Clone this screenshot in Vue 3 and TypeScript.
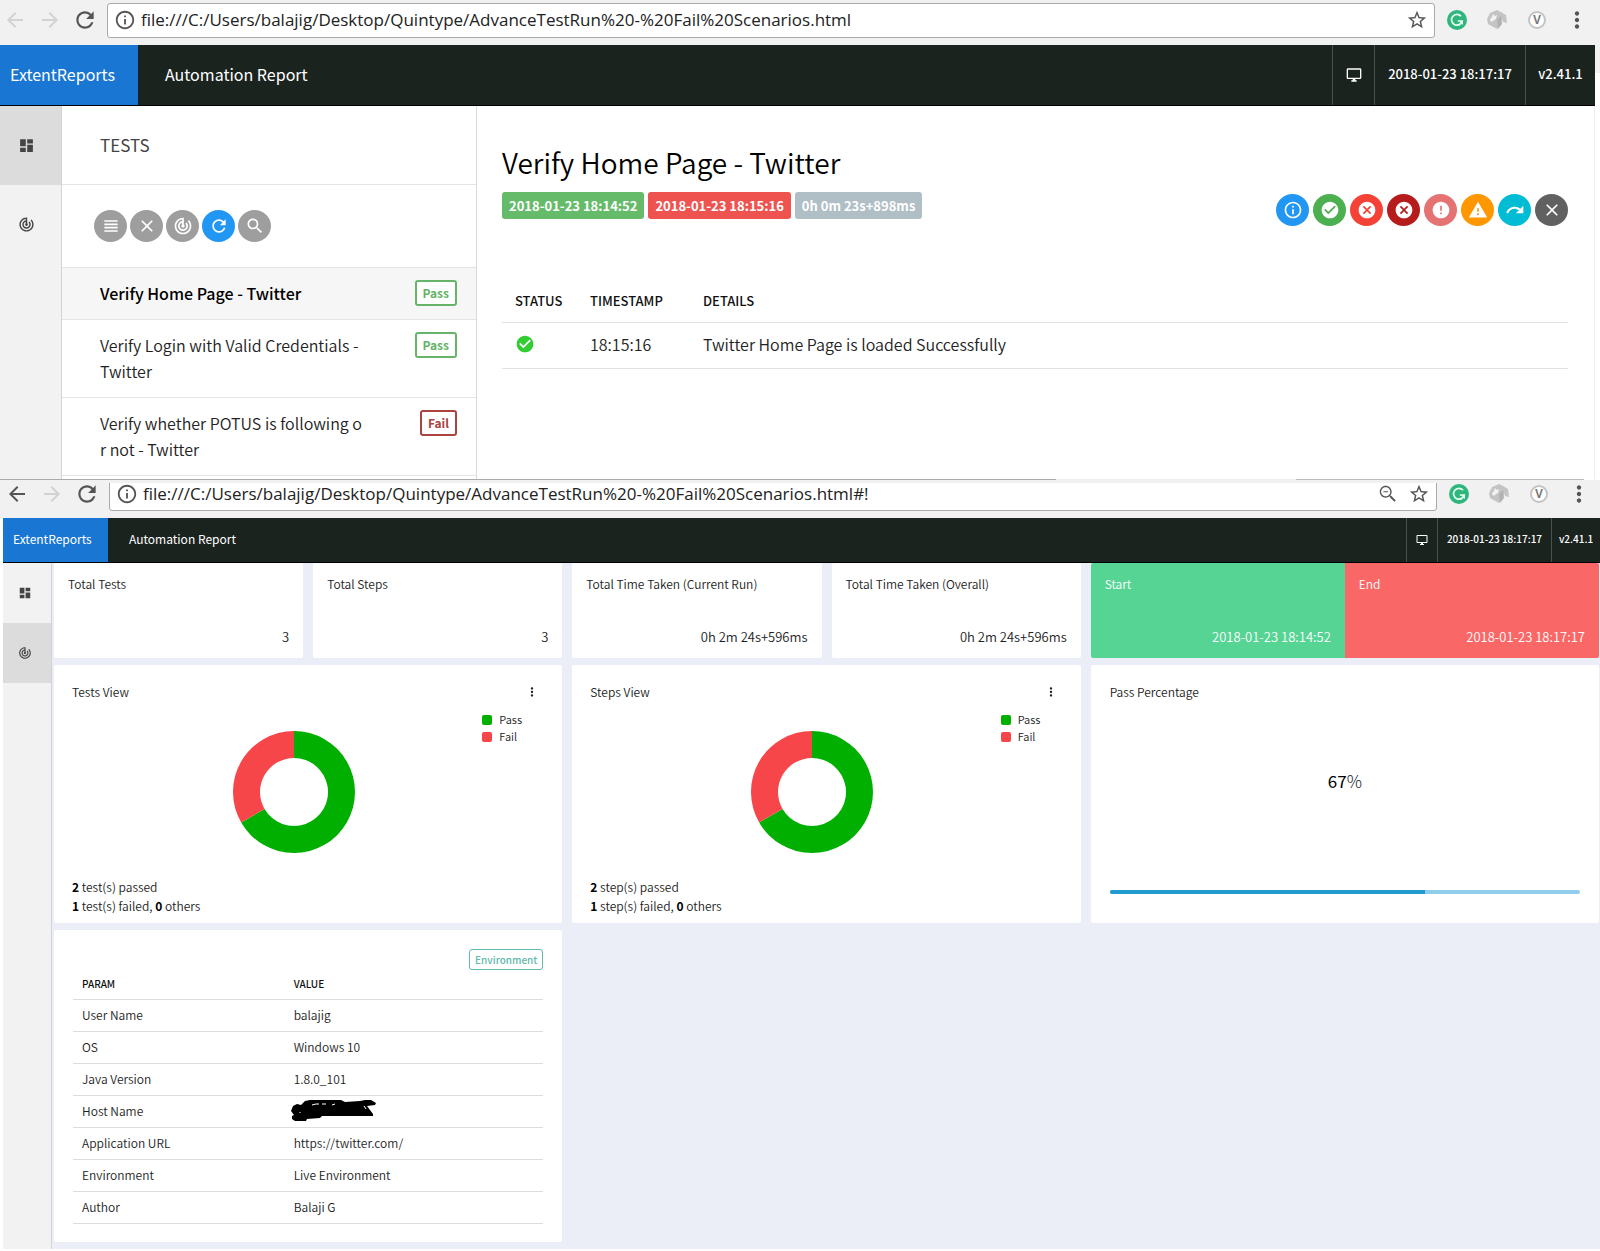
<script setup lang="ts">
interface Filter {
  label: string
  icon: string
  color: string
}

interface TestItem {
  name: string
  status: 'Pass' | 'Fail'
  active?: boolean
}

const icons: Record<string, string> = {
  back: 'M20 11H7.83l5.59-5.59L12 4l-8 8 8 8 1.41-1.41L7.83 13H20v-2z',
  forward: 'M12 4l-1.41 1.41L16.17 11H4v2h12.17l-5.58 5.59L12 20l8-8z',
  refresh:
    'M17.65 6.35C16.2 4.9 14.21 4 12 4c-4.42 0-7.99 3.58-7.99 8s3.57 8 7.99 8c3.73 0 6.84-2.55 7.73-6h-2.08c-.82 2.33-3.04 4-5.65 4-3.31 0-6-2.69-6-6s2.69-6 6-6c1.66 0 3.14.69 4.22 1.78L13 11h7V4l-2.35 2.35z',
  info: 'M11 17h2v-6h-2v6zm1-15C6.48 2 2 6.48 2 12s4.48 10 10 10 10-4.48 10-10S17.52 2 12 2zm0 18c-4.41 0-8-3.59-8-8s3.59-8 8-8 8 3.59 8 8-3.59 8-8 8zM11 9h2V7h-2v2z',
  star: 'M22 9.24l-7.19-.62L12 2 9.19 8.63 2 9.24l5.46 4.73L5.82 21 12 17.27 18.18 21l-1.63-7.03L22 9.24zM12 15.4l-3.76 2.27 1-4.28-3.32-2.88 4.38-.38L12 6.1l1.71 4.04 4.38.38-3.32 2.88 1 4.28L12 15.4z',
  zoomOut:
    'M15.5 14h-.79l-.28-.27C15.41 12.59 16 11.11 16 9.5 16 5.91 13.09 3 9.5 3S3 5.91 3 9.5 5.91 16 9.5 16c1.61 0 3.09-.59 4.23-1.57l.27.28v.79l5 4.99L20.49 19l-4.99-5zm-6 .5C6.8 14.5 4.5 12.2 4.5 9.5S6.8 4.5 9.5 4.5s5 2.3 5 5-2.3 5-5 5zM7 9h5v1.2H7z',
  more: 'M12 8c1.1 0 2-.9 2-2s-.9-2-2-2-2 .9-2 2 .9 2 2 2zm0 2c-1.1 0-2 .9-2 2s.9 2 2 2 2-.9 2-2-.9-2-2-2zm0 6c-1.1 0-2 .9-2 2s.9 2 2 2 2-.9 2-2-.9-2-2-2z',
  desktop:
    'M21 2H3c-1.1 0-2 .9-2 2v12c0 1.1.9 2 2 2h7v2H8v2h8v-2h-2v-2h7c1.1 0 2-.9 2-2V4c0-1.1-.9-2-2-2zm0 14H3V4h18v12z',
  dashboard: 'M3 13h8V3H3v10zm0 8h8v-6H3v6zm10 0h8V11h-8v10zm0-18v6h8V3h-8z',
  track: 'M19.07 4.93l-1.41 1.41C19.1 7.79 20 9.79 20 12c0 4.42-3.58 8-8 8s-8-3.58-8-8c0-4.08 3.05-7.44 7-7.93v2.02C8.16 6.57 6 9.03 6 12c0 3.31 2.69 6 6 6s6-2.69 6-6c0-1.66-.67-3.16-1.76-4.24l-1.41 1.41C15.55 9.9 16 10.9 16 12c0 2.21-1.79 4-4 4s-4-1.79-4-4c0-1.86 1.28-3.41 3-3.86v2.14c-.6.35-1 .98-1 1.72 0 1.1.9 2 2 2s2-.9 2-2c0-.74-.4-1.38-1-1.72V2h-1C6.48 2 2 6.48 2 12s4.48 10 10 10 10-4.48 10-10c0-2.76-1.12-5.26-2.93-7.07z',
  lines: 'M4 15h16v-2H4v2zm0 4h16v-2H4v2zm0-8h16V9H4v2zm0-6v2h16V5H4z',
  close:
    'M19 6.41L17.59 5 12 10.59 6.41 5 5 6.41 10.59 12 5 17.59 6.41 19 12 13.41 17.59 19 19 17.59 13.41 12z',
  search:
    'M15.5 14h-.79l-.28-.27C15.41 12.59 16 11.11 16 9.5 16 5.91 13.09 3 9.5 3S3 5.91 3 9.5 5.91 16 9.5 16c1.61 0 3.09-.59 4.23-1.57l.27.28v.79l5 4.99L20.49 19l-4.99-5zm-6 0C7.01 14 5 11.99 5 9.5S7.01 5 9.5 5 14 7.01 14 9.5 11.99 14 9.5 14z',
  check:
    'M12 2C6.48 2 2 6.48 2 12s4.48 10 10 10 10-4.48 10-10S17.52 2 12 2zm-2 15l-5-5 1.41-1.41L10 14.17l7.59-7.59L19 8l-9 9z',
  cancel:
    'M12 2C6.47 2 2 6.47 2 12s4.47 10 10 10 10-4.47 10-10S17.53 2 12 2zm5 13.59L15.59 17 12 13.41 8.41 17 7 15.59 10.59 12 7 8.41 8.41 7 12 10.59 15.59 7 17 8.41 13.41 12 17 15.59z',
  error:
    'M12 2C6.48 2 2 6.48 2 12s4.48 10 10 10 10-4.48 10-10S17.52 2 12 2zm1 15h-2v-2h2v2zm0-4h-2V7h2v6z',
  warning: 'M1 21h22L12 2 1 21zm12-3h-2v-2h2v2zm0-4h-2v-4h2v4z',
  redo: 'M18.4 10.6C16.55 8.99 14.15 8 11.5 8c-4.65 0-8.58 3.03-9.96 7.22L3.9 16c1.05-3.19 4.05-5.5 7.6-5.5 1.95 0 3.73.72 5.12 1.88L13 16h9V7l-3.6 3.6z',
}

const fileUrl =
  'file:///C:/Users/balajig/Desktop/Quintype/AdvanceTestRun%20-%20Fail%20Scenarios.html'

const listFilters: Filter[] = [
  { label: 'Filter by status', icon: 'lines', color: '#9e9e9e' },
  { label: 'Clear filters', icon: 'close', color: '#9e9e9e' },
  { label: 'Toggle dashboard', icon: 'track', color: '#9e9e9e' },
  { label: 'Refresh on resize', icon: 'refresh', color: '#2196f3' },
  { label: 'Search tests', icon: 'search', color: '#9e9e9e' },
]

const stepFilters: Filter[] = [
  { label: 'Info', icon: 'info', color: '#2196f3' },
  { label: 'Pass', icon: 'check', color: '#4caf50' },
  { label: 'Fail', icon: 'cancel', color: '#f44336' },
  { label: 'Fatal', icon: 'cancel', color: '#b71c1c' },
  { label: 'Error', icon: 'error', color: '#e57373' },
  { label: 'Warning', icon: 'warning', color: '#ff9800' },
  { label: 'Skip', icon: 'redo', color: '#00bcd4' },
  { label: 'Clear', icon: 'close', color: '#616161' },
]

const tests: TestItem[] = [
  { name: 'Verify Home Page - Twitter', status: 'Pass', active: true },
  { name: 'Verify Login with Valid Credentials -\nTwitter', status: 'Pass' },
  { name: 'Verify whether POTUS is following o\nr not - Twitter', status: 'Fail' },
]

const totals = [
  { label: 'Total Tests', value: '3' },
  { label: 'Total Steps', value: '3' },
  { label: 'Total Time Taken (Current Run)', value: '0h 2m 24s+596ms' },
  { label: 'Total Time Taken (Overall)', value: '0h 2m 24s+596ms' },
]

const charts = [
  { title: 'Tests View', unit: 'test(s)', passed: 2, failed: 1, others: 0 },
  { title: 'Steps View', unit: 'step(s)', passed: 2, failed: 1, others: 0 },
]

const environment = [
  { param: 'User Name', value: 'balajig' },
  { param: 'OS', value: 'Windows 10' },
  { param: 'Java Version', value: '1.8.0_101' },
  { param: 'Host Name', value: '' },
  { param: 'Application URL', value: 'https://twitter.com/' },
  { param: 'Environment', value: 'Live Environment' },
  { param: 'Author', value: 'Balaji G' },
]

const passPercentage = 67

const windows = [
  { id: 'tests', url: fileUrl, zoomed: false },
  { id: 'dashboard', url: fileUrl + '#!', zoomed: true },
]
</script>

<template>
  <div class="page">
    <section
      v-for="win in windows"
      :key="win.id"
      class="window"
      :class="{ compact: win.zoomed }"
    >
      <div class="toolbar-clip">
        <div class="toolbar">
          <button class="tool" :class="{ off: !win.zoomed }" aria-label="Back">
            <svg class="ic24" viewBox="0 0 24 24"><path :d="icons.back" /></svg>
          </button>
          <button class="tool off" aria-label="Forward">
            <svg class="ic24" viewBox="0 0 24 24"><path :d="icons.forward" /></svg>
          </button>
          <button class="tool" aria-label="Reload">
            <svg class="ic26" viewBox="0 0 24 24"><path :d="icons.refresh" /></svg>
          </button>
          <div class="address">
            <svg class="ic22" viewBox="0 0 24 24"><path :d="icons.info" /></svg>
            <input type="text" aria-label="Address" :value="win.url" spellcheck="false" />
            <button v-if="win.zoomed" class="tool" aria-label="Zoom out">
              <svg class="ic22" viewBox="0 0 24 24"><path :d="icons.zoomOut" /></svg>
            </button>
            <button class="tool" aria-label="Bookmark">
              <svg class="ic22" viewBox="0 0 24 24"><path :d="icons.star" /></svg>
            </button>
          </div>
          <div class="extensions">
            <button class="tool" aria-label="Grammar extension">
              <svg class="ic20" viewBox="0 0 20 20">
                <circle cx="10" cy="10" r="10" fill="#2eb67d" />
                <path
                  d="M14 6.2A5.4 5.4 0 1 0 15.2 11H10.8"
                  fill="none"
                  stroke="#e6fff2"
                  stroke-width="1.7"
                />
                <path d="M12.2 11.2h3.8v3.8z" fill="#e6fff2" />
              </svg>
            </button>
            <button class="tool" aria-label="Package extension">
              <svg class="ic20" viewBox="0 0 20 20">
                <path d="M3 3l7-3 4 2 5 3 1 8-4-1-1-3-1 4-4 6-9-5L0 9z" fill="#c4c4c4" />
                <path d="M10 10l4-4 1 8-4 5z" fill="#b2b2b2" />
                <path d="M3 9l2-2 1-3 2 2 2-1-1 4-3 2-2 1z" fill="#f2f2f2" />
              </svg>
            </button>
            <button class="tool" aria-label="Vue extension">
              <span class="vmark">V</span>
            </button>
            <button class="tool" aria-label="Menu">
              <svg class="ic26" viewBox="0 0 24 24"><path :d="icons.more" /></svg>
            </button>
          </div>
        </div>
      </div>

      <div class="viewport">
        <div class="frame">
          <header class="nav">
            <a class="logo" href="#">ExtentReports</a>
            <span class="report-name">Automation Report</span>
            <a class="cell theme" href="#" aria-label="Theme">
              <svg class="monitor" viewBox="0 0 24 24"><path :d="icons.desktop" /></svg>
            </a>
            <span class="cell date">2018-01-23 18:17:17</span>
            <span class="cell version">v2.41.1</span>
          </header>

          <div class="body">
            <nav class="side">
              <a href="#" :class="{ on: !win.zoomed }" aria-label="Tests">
                <svg viewBox="0 0 24 24"><path :d="icons.dashboard" /></svg>
              </a>
              <a href="#" :class="{ on: win.zoomed }" aria-label="Dashboard">
                <svg viewBox="0 0 24 24"><path :d="icons.track" /></svg>
              </a>
            </nav>

            <template v-if="!win.zoomed">
              <section class="test-panel">
                <h2>TESTS</h2>
                <div class="list-filters">
                  <button
                    v-for="f in listFilters"
                    :key="f.label"
                    class="round"
                    :style="{ background: f.color }"
                    :aria-label="f.label"
                  >
                    <svg viewBox="0 0 24 24"><path :d="icons[f.icon]" /></svg>
                  </button>
                </div>
                <ul class="tests">
                  <li v-for="t in tests" :key="t.name" :class="{ active: t.active }">
                    <span class="test-name">{{ t.name }}</span>
                    <span class="tag" :class="t.status.toLowerCase()">{{ t.status }}</span>
                  </li>
                </ul>
              </section>

              <main class="detail">
                <h1>Verify Home Page - Twitter</h1>
                <div class="meta">
                  <span class="label start">2018-01-23 18:14:52</span>
                  <span class="label end">2018-01-23 18:15:16</span>
                  <span class="label took">0h 0m 23s+898ms</span>
                  <div class="step-filters">
                    <button
                      v-for="f in stepFilters"
                      :key="f.label"
                      class="round"
                      :style="{ background: f.color }"
                      :aria-label="f.label"
                    >
                      <svg viewBox="0 0 24 24"><path :d="icons[f.icon]" /></svg>
                    </button>
                  </div>
                </div>
                <table class="steps">
                  <thead>
                    <tr>
                      <th class="c-status">STATUS</th>
                      <th class="c-time">TIMESTAMP</th>
                      <th>DETAILS</th>
                    </tr>
                  </thead>
                  <tbody>
                    <tr>
                      <td>
                        <svg class="ok" viewBox="0 0 24 24" role="img" aria-label="Pass">
                          <path :d="icons.check" />
                        </svg>
                      </td>
                      <td>18:15:16</td>
                      <td>Twitter Home Page is loaded Successfully</td>
                    </tr>
                  </tbody>
                </table>
              </main>
            </template>

            <main v-else class="dashboard">
              <div v-for="t in totals" :key="t.label" class="card total">
                <span>{{ t.label }}</span>
                <span class="value">{{ t.value }}</span>
              </div>
              <div class="card span2 times">
                <div class="total started">
                  <span>Start</span>
                  <span class="value">2018-01-23 18:14:52</span>
                </div>
                <div class="total ended">
                  <span>End</span>
                  <span class="value">2018-01-23 18:17:17</span>
                </div>
              </div>

              <div v-for="c in charts" :key="c.title" class="card span2 chart">
                <div class="card-head">
                  <h3>{{ c.title }}</h3>
                  <button class="dots" aria-label="More">
                    <svg viewBox="0 0 24 24"><path :d="icons.more" /></svg>
                  </button>
                </div>
                <div class="chart-row">
                  <!-- 2/3 pass sector clockwise from the top, the rest fail -->
                  <svg class="donut" viewBox="-61 -61 122 122" role="img" :aria-label="c.title">
                    <path
                      d="M0-61A61 61 0 1 1-52.83 30.5L-29.44 17A34 34 0 1 0 0-34z"
                      fill="#00af00"
                    />
                    <path
                      d="M-52.83 30.5A61 61 0 0 1 0-61V-34A34 34 0 0 0-29.44 17z"
                      fill="#f7464a"
                    />
                  </svg>
                  <ul class="legend">
                    <li><i class="swatch g"></i>Pass</li>
                    <li><i class="swatch r"></i>Fail</li>
                  </ul>
                </div>
                <p class="stats">
                  <b>{{ c.passed }}</b> {{ c.unit }} passed<br />
                  <b>{{ c.failed }}</b> {{ c.unit }} failed, <b>{{ c.others }}</b> others
                </p>
              </div>

              <div class="card span2 percent">
                <h3>Pass Percentage</h3>
                <p class="rate"><span>{{ passPercentage }}</span>%</p>
                <div
                  class="track"
                  role="progressbar"
                  aria-label="Pass Percentage"
                  :aria-valuenow="passPercentage"
                >
                  <div class="fill" :style="{ width: passPercentage + '%' }"></div>
                </div>
              </div>

              <div class="card span2 env">
                <span class="tag teal">Environment</span>
                <table>
                  <thead>
                    <tr>
                      <th class="c-param">PARAM</th>
                      <th>VALUE</th>
                    </tr>
                  </thead>
                  <tbody>
                    <tr v-for="row in environment" :key="row.param">
                      <td>{{ row.param }}</td>
                      <td>
                        <template v-if="row.value">{{ row.value }}</template>
                        <svg v-else class="redacted" viewBox="0 0 85 21" role="img" aria-label="Hidden">
                          <path
                            d="M0 11L2 6 6 4 10 5 14 1 19 0H50L54 2 69 1 74 0H80L85 3 84 5 76 6 82 14V16H31L29 18 16 19 15 21H4L1 19 1 16 3 15z"
                          />
                          <path
                            d="M21 5l4-1h3M31 4h4M41 5l3-1M9 12v1M73 6l2 3"
                            fill="none"
                            stroke="#fff"
                          />
                        </svg>
                      </td>
                    </tr>
                  </tbody>
                </table>
              </div>
            </main>
          </div>
        </div>
        <div v-if="!win.zoomed" class="edge"></div>
      </div>
    </section>
  </div>
</template>

<style>
body {
  margin: 0;
  background: #fff;
}
</style>

<style scoped>
.page {
  font-family: 'Noto Sans CJK SC', 'Source Sans Pro', 'Noto Sans', sans-serif;
  color: #222;
  padding-bottom: 2px;
}
.page * {
  box-sizing: border-box;
}
h1,
h2,
h3,
p,
ul {
  margin: 0;
  padding: 0;
  list-style: none;
}
button {
  border: 0;
  padding: 0;
  background: none;
  font: inherit;
  color: inherit;
  cursor: pointer;
}
a {
  color: inherit;
  text-decoration: none;
}
svg {
  display: block;
  fill: currentColor;
}

/* browser toolbar */
.toolbar {
  display: flex;
  align-items: center;
  gap: 9px;
  height: 45px;
  padding: 0 10px 5px 2px;
  background: #f1f1f1;
  color: #555;
}
.tool {
  flex: none;
  display: flex;
  align-items: center;
  justify-content: center;
  width: 26px;
  height: 26px;
}
.tool.off {
  color: #d2d2d2;
}
.ic20 {
  width: 20px;
  height: 20px;
}
.ic22 {
  flex: none;
  width: 22px;
  height: 22px;
}
.ic24 {
  width: 24px;
  height: 24px;
}
.ic26 {
  width: 26px;
  height: 26px;
}
.address {
  flex: 1;
  display: flex;
  align-items: center;
  gap: 5px;
  height: 35px;
  padding: 0 4px 0 6px;
  border: 1px solid #a9a9a9;
  border-radius: 3px;
  background: #fff;
}
.address input {
  flex: 1;
  min-width: 0;
  border: 0;
  padding: 0;
  outline: 0;
  background: none;
  color: #222;
  font: 17px/28px 'Open Sans', 'Noto Sans', sans-serif;
}
.extensions {
  display: flex;
  gap: 14px;
}
.vmark {
  width: 18px;
  height: 18px;
  border: 2px solid #c4c4c4;
  border-radius: 50%;
  background: #fff;
  color: #777;
  font: bold 12px/14px 'Liberation Sans', sans-serif;
  text-align: center;
}

/* report header */
.viewport {
  display: flex;
}
.frame {
  flex: 1;
  min-width: 0;
}
.edge {
  width: 5px;
  background: linear-gradient(#f1f1f1 28px, #fff 28px);
}
.nav {
  display: flex;
  align-items: stretch;
  height: 61px;
  border-bottom: 1px solid #000;
  background: #1b231f;
  color: #fff;
  font-size: 16px;
  line-height: 58px;
}
.logo {
  width: 138px;
  padding-left: 10px;
  background: #1976d2;
}
.report-name {
  flex: 1;
  padding-left: 27px;
}
.cell {
  border-left: 1px solid #48504c;
  font-size: 13px;
  font-weight: 500;
  text-align: center;
}
.theme {
  width: 42px;
  display: flex;
  align-items: center;
  justify-content: center;
}
.date {
  width: 151px;
}
.version {
  width: 70px;
}
.monitor {
  width: 16px;
  height: 16px;
}

/* side menu */
.body {
  display: flex;
  min-height: 373px;
}
.side {
  flex: none;
  width: 62px;
  border-right: 1px solid #d4d4d4;
  background: #f2f2f2;
}
.side a {
  display: flex;
  align-items: center;
  justify-content: center;
  height: 79px;
  padding-right: 9px;
  color: #444;
}
.side a.on {
  background: #dcdcdc;
}
.side svg {
  width: 17px;
  height: 17px;
}

/* test list */
.test-panel {
  flex: none;
  width: 415px;
  border-right: 1px solid #dadada;
}
h2 {
  height: 79px;
  padding-left: 38px;
  border-bottom: 1px solid #e4e4e4;
  font-size: 17px;
  font-weight: 400;
  line-height: 78px;
  color: #444;
}
.list-filters {
  display: flex;
  gap: 3px;
  padding: 25px 32px;
}
.round {
  display: flex;
  align-items: center;
  justify-content: center;
  width: 33px;
  height: 32px;
  border-radius: 50%;
  color: #fff;
}
.round svg {
  width: 20px;
  height: 20px;
}
.tests {
  border-bottom: 1px solid #e4e4e4;
}
.tests li {
  display: flex;
  justify-content: space-between;
  align-items: flex-start;
  padding: 12px 19px 13px 38px;
  border-top: 1px solid #e4e4e4;
  font-size: 16px;
  font-weight: 350;
  line-height: 26px;
}
.tests li.active {
  background: #f6f6f6;
  color: #000;
  font-weight: 500;
}
.test-name {
  white-space: pre-line;
}
.tag {
  border: 2px solid;
  border-radius: 3px;
  padding: 0 6px;
  background: #fff;
  font-size: 12px;
  font-weight: 700;
  line-height: 22px;
}
.tag.pass {
  color: #66b36a;
}
.tag.fail {
  color: #a94442;
}

/* test detail */
.detail {
  flex: 1;
  min-width: 0;
  padding: 36px 26px 0 25px;
  border-right: 1px solid #eee;
}
h1 {
  font-size: 28px;
  font-weight: 350;
  line-height: 40px;
  color: #000;
}
.meta {
  display: flex;
  align-items: flex-start;
  gap: 4px;
  margin-top: 10px;
}
.label {
  padding: 0 7px;
  border-radius: 3px;
  color: #fff;
  font-size: 13px;
  font-weight: 700;
  line-height: 27px;
}
.label.start {
  background: #66bb6a;
}
.label.end {
  background: #ef5350;
}
.label.took {
  background: #b0bec5;
}
.step-filters {
  display: flex;
  gap: 4px;
  margin: 2px 0 0 auto;
}
table {
  width: 100%;
  border-collapse: collapse;
  table-layout: fixed;
  text-align: left;
}
.steps {
  margin-top: 54px;
  font-size: 16px;
  font-weight: 350;
}
.steps th {
  height: 42px;
  padding: 0 13px;
  border-bottom: 1px solid #e0e0e0;
  color: #111;
  font-size: 13px;
  font-weight: 500;
}
.steps td {
  height: 46px;
  padding: 0 13px 2px;
  border-bottom: 1px solid #e0e0e0;
}
.c-status {
  width: 75px;
}
.c-time {
  width: 113px;
}
.ok {
  width: 20px;
  height: 20px;
  color: #32cd32;
}

/* second window, zoomed out */
.compact .toolbar-clip {
  overflow: hidden;
  border-top: 3px solid #f1f1f1;
}
.compact::before {
  content: '';
  display: block;
  height: 1px;
  background: linear-gradient(90deg, #aaa 66%, #eee 66%, #eee 81%, #bbb 81%, #bbb 99%, #fff 99%);
}
.compact .toolbar {
  height: 44px;
  margin-top: -9px;
  padding: 0 8px 5px 4px;
}
.compact .viewport {
  padding-left: 3px;
}
.compact .nav {
  height: 45px;
  font-size: 12px;
  line-height: 42px;
}
.compact .logo {
  width: 105px;
}
.compact .report-name {
  padding-left: 21px;
}
.compact .cell {
  font-size: 10px;
}
.compact .theme {
  width: 31px;
}
.compact .date {
  width: 114px;
}
.compact .version {
  width: 49px;
}
.compact .monitor {
  width: 12px;
  height: 12px;
}
.compact .side {
  width: 49px;
  border-right-color: #d0d3da;
}
.compact .side a {
  height: 60px;
  padding-right: 5px;
}
.compact .side svg {
  width: 14px;
  height: 14px;
}
.dashboard {
  flex: 1;
  min-width: 0;
  display: grid;
  grid-template-columns: repeat(6, 1fr);
  align-content: start;
  gap: 7px 10px;
  padding: 0 1px 7px 2px;
  background: #ebeef6;
  font-size: 12px;
  font-weight: 350;
}
.card {
  border-radius: 2px;
  background: #fff;
}
.span2 {
  grid-column: span 2;
}
.total {
  display: flex;
  flex-direction: column;
  justify-content: space-between;
  min-height: 95px;
  padding: 11px 14px;
  line-height: 20px;
}
.total .value {
  font-size: 13px;
  text-align: right;
}
.times {
  display: flex;
  overflow: hidden;
  color: #fff;
}
.times .total {
  flex: 1;
}
.started {
  background: #56d494;
}
.ended {
  background: #fa6767;
}
h3 {
  font-size: 12px;
  font-weight: 350;
  line-height: 20px;
}
.chart {
  padding: 17px 18px 8px;
}
.card-head {
  display: flex;
  justify-content: space-between;
}
.dots {
  display: flex;
  align-items: center;
  justify-content: center;
  width: 24px;
}
.dots svg {
  width: 14px;
  height: 14px;
}
.chart-row {
  display: flex;
  margin-top: 9px;
}
.donut {
  width: 122px;
  height: 122px;
  margin: 20px auto 0;
}
.legend {
  width: 62px;
  margin-left: -34px;
  font-size: 11px;
  line-height: 17px;
}
.legend li {
  display: flex;
  align-items: center;
  gap: 7px;
}
.swatch {
  width: 10px;
  height: 10px;
  border-radius: 2px;
}
.swatch.g {
  background: #00af00;
}
.swatch.r {
  background: #f7464a;
}
.stats {
  margin-top: 24px;
  line-height: 19px;
}
.stats b {
  font-weight: 700;
  color: #000;
}
.percent {
  padding: 17px 19px;
}
.rate {
  margin-top: 66px;
  font-size: 17px;
  font-weight: 300;
  line-height: 26px;
  text-align: center;
}
.rate span {
  color: #000;
  font-weight: 400;
}
.track {
  height: 4px;
  margin-top: 96px;
  border-radius: 2px;
  background: #8fcdea;
  overflow: hidden;
}
.fill {
  height: 100%;
  background: #1f9bcf;
}
.env {
  display: flex;
  flex-direction: column;
  padding: 19px 19px 18px;
}
.tag.teal {
  align-self: flex-end;
  border-width: 1px;
  padding: 0 5px;
  color: #61b8ae;
  font-size: 10px;
  font-weight: 500;
  line-height: 19px;
}
.env th {
  height: 29px;
  padding: 0 9px 1px;
  border-bottom: 1px solid #ddd;
  color: #111;
  font-size: 10px;
  font-weight: 500;
}
.env td {
  height: 32px;
  padding: 0 9px 2px;
  border-bottom: 1px solid #ddd;
}
.c-param {
  width: 45%;
}
.redacted {
  width: 85px;
  height: 21px;
  margin-left: -3px;
  fill: #000;
}
</style>
